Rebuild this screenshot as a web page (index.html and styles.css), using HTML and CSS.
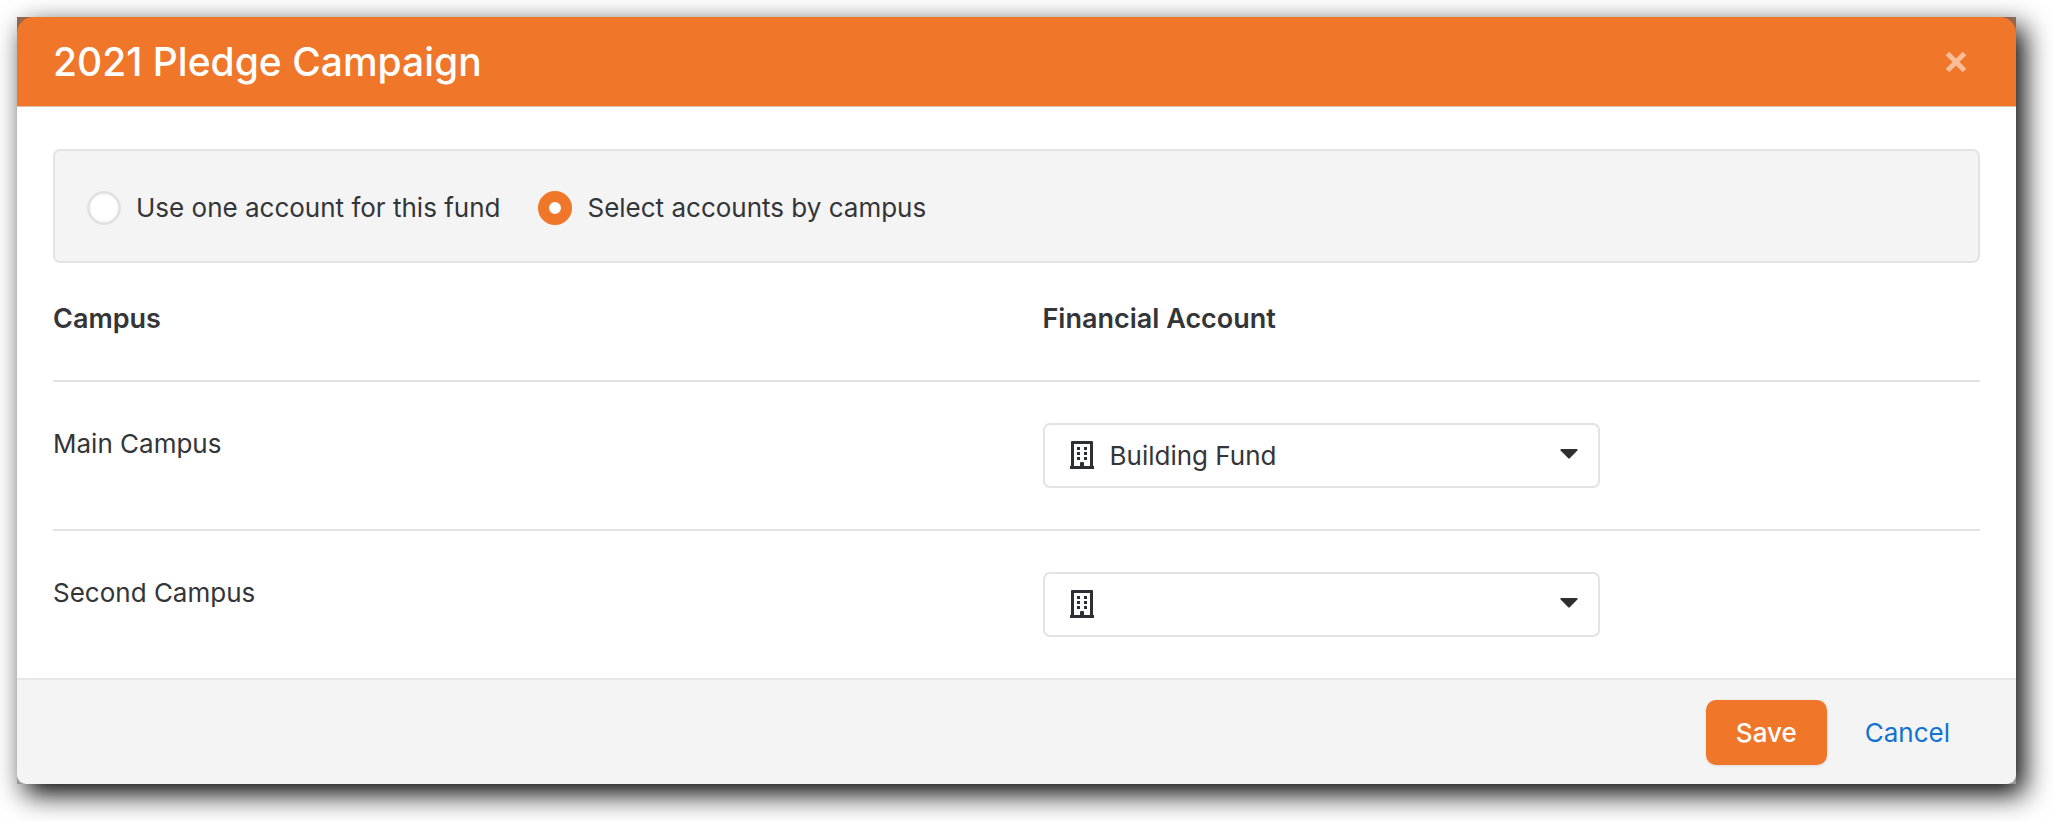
FILE: index.html
```html
<!DOCTYPE html>
<html lang="en">
<head>
<meta charset="utf-8">
<title>2021 Pledge Campaign</title>
<link rel="stylesheet" href="styles.css">
</head>
<body>
<svg class="sprite" aria-hidden="true">
  <symbol id="building" viewBox="0 0 24 28">
    <path fill="currentColor" fill-rule="evenodd" d="M2 0h20q1 0 1 1v24h1v3H0v-3h1V1q0-1 1-1zM4 3v22h6v-3q0-1 1-1h2q1 0 1 1v3h6V3z"/>
    <path fill="currentColor" d="M7 6h3v3H7zM14 6h3v3h-3zM7 11h3v3H7zM14 11h3v3h-3zM7 16h3v3H7zM14 16h3v3h-3z"/>
  </symbol>
  <symbol id="caret" viewBox="0 0 18 10">
    <path fill="currentColor" d="M1 0h16q1 .6 .4 1.400L10 9q-1 1-2 0L.6 1.400Q0 .6 1 0z"/>
  </symbol>
</svg>
<div class="dialog" role="dialog" aria-labelledby="title">
  <header class="dialog-header">
    <h1 class="dialog-title" id="title">2021 Pledge Campaign</h1>
    <button class="close" type="button" aria-label="Close">
      <svg width="22" height="22" viewBox="0 0 22 22" aria-hidden="true"><path d="M2.500 2.500l17 17M19.500 2.500l-17 17" stroke="currentColor" stroke-width="5"/></svg>
    </button>
  </header>
  <form class="dialog-form">
    <div class="dialog-body">
      <div class="options">
        <label class="option"><input class="radio" type="radio" name="mode">Use one account for this fund</label>
        <label class="option"><input class="radio" type="radio" name="mode" checked>Select accounts by campus</label>
      </div>
      <table class="accounts">
        <thead>
          <tr><th>Campus</th><th>Financial Account</th></tr>
        </thead>
        <tbody>
          <tr>
            <td><label for="main">Main Campus</label></td>
            <td>
              <div class="picker">
                <svg class="picker-icon" aria-hidden="true"><use href="#building"/></svg>
                <select class="picker-select" id="main"><option>Building Fund</option></select>
                <svg class="picker-caret" aria-hidden="true"><use href="#caret"/></svg>
              </div>
            </td>
          </tr>
          <tr>
            <td><label for="second">Second Campus</label></td>
            <td>
              <div class="picker">
                <svg class="picker-icon" aria-hidden="true"><use href="#building"/></svg>
                <select class="picker-select" id="second"><option value=""></option></select>
                <svg class="picker-caret" aria-hidden="true"><use href="#caret"/></svg>
              </div>
            </td>
          </tr>
        </tbody>
      </table>
    </div>
    <footer class="dialog-footer">
      <button class="save" type="button">Save</button>
      <button class="cancel" type="button">Cancel</button>
    </footer>
  </form>
</div>
</body>
</html>
```
FILE: styles.css
```css
* {
  box-sizing: border-box;
}

body {
  margin: 0;
  padding: 17px 37px 37px 17px;
  background: #fff;
  color: #343538;
  font: 26px/42px Inter, "Liberation Sans", sans-serif;
}

button,
select {
  font: inherit;
  color: inherit;
}

.sprite {
  display: none;
}

.dialog {
  background: linear-gradient(#946650 50%, #999 50%);
  box-shadow: 8px 10px 26px #000;
}

.dialog-header {
  display: flex;
  align-items: center;
  justify-content: space-between;
  padding: 20px 49px 19px 36px;
  border-bottom: 1px solid #dcbfa8;
  border-radius: 16px 16px 0 0;
  background: #f07629;
  color: #fff;
}

.dialog-title {
  margin: 0;
  font-size: 39px;
  line-height: 50px;
  font-weight: 500;
}

.close {
  display: flex;
  padding: 0;
  border: 0;
  background: none;
  color: #f9bd98;
}

.dialog-body {
  padding: 42px 36px 0;
  background: #fff;
}

.options {
  display: flex;
  gap: 38px;
  padding: 36px 32px 32px;
  border: 2px solid #e2e3e3;
  border-radius: 7px;
  background: #f4f4f4;
}

.option {
  display: flex;
  align-items: center;
  gap: 15px;
}

.radio {
  appearance: none;
  width: 34px;
  height: 34px;
  margin: 0;
  border: 3px solid #e1e3e3;
  border-radius: 50%;
  background: #fff;
}

.radio:checked {
  border: 11px solid #f07629;
}

.accounts {
  width: 100%;
  table-layout: fixed;
  border-spacing: 0;
}

.accounts th {
  padding: 35px 8px 40px 0;
  text-align: left;
  font-size: 27px;
  font-weight: 600;
}

.accounts td {
  padding: 41px 8px 41px 0;
  border-top: 2px solid #e2e3e3;
  vertical-align: top;
}

.accounts th + th,
.accounts td + td {
  padding-left: 26px;
}

.picker {
  position: relative;
  width: 60%;
}

.picker-select {
  display: block;
  appearance: none;
  width: 100%;
  height: 65px;
  padding: 0 48px 0 65px;
  border: 2px solid #e2e3e3;
  border-radius: 7px;
  background: #fff;
}

.picker-icon,
.picker-caret {
  position: absolute;
  pointer-events: none;
  color: #2e2f32;
}

.picker-icon {
  top: 18px;
  left: 27px;
  width: 24px;
  height: 28px;
}

.picker-caret {
  top: 26px;
  right: 22px;
  width: 18px;
  height: 10px;
}

.dialog-footer {
  display: flex;
  justify-content: flex-end;
  gap: 8px;
  padding: 20px 36px 19px;
  border-top: 2px solid #e6e7e7;
  border-radius: 0 0 9px 9px;
  background: #f4f4f4;
}

.save,
.cancel {
  height: 65px;
  padding: 0 30px;
  border: 0;
  border-radius: 10px;
}

.save {
  background: #f07629;
  box-shadow: 0 1px 3px #0000001a;
  color: #fff;
  font-weight: 500;
}

.cancel {
  background: none;
  color: #1173d1;
}
```
